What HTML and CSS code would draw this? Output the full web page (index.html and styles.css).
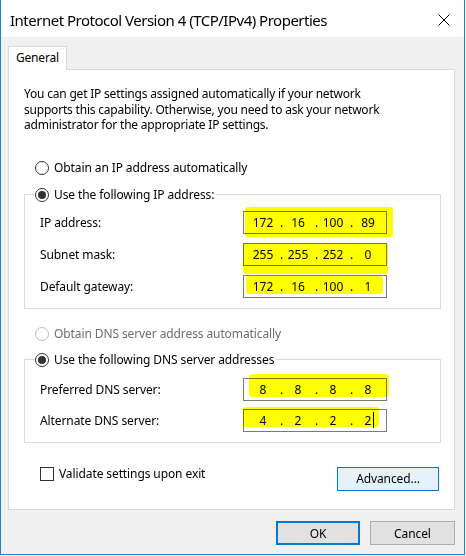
FILE: index.html
```html
<!DOCTYPE html>
<html lang="en">
<head>
  <meta charset="UTF-8">
  <meta name="viewport" content="width=device-width, initial-scale=1.0">
  <title>Internet Protocol Version 4 (TCP/IPv4) Properties</title>
  <link rel="stylesheet" href="styles.css">
</head>
<body>
  <div class="window">
    <div class="titlebar">
      <span class="title">Internet Protocol Version 4 (TCP/IPv4) Properties</span>
      <svg class="close" width="12" height="12" viewBox="0 0 12 12">
        <path d="M0.5 0.5 L11.5 11.5 M11.5 0.5 L0.5 11.5" stroke="#000" stroke-width="1" fill="none"/>
      </svg>
    </div>

    <div class="dialog-body">
      <div class="tabs">
        <div class="tab">General</div>
      </div>

      <div class="panel">
        <p class="intro">You can get IP settings assigned automatically if your network<br>supports this capability. Otherwise, you need to ask your network<br>administrator for the appropriate IP settings.</p>

        <div class="radio-row radio-first"><span class="radio"></span>Obtain an IP address automatically</div>

        <fieldset class="group group-ip">
          <legend><span class="radio checked"></span>Use the following IP address:</legend>
          <div class="rows">
            <span class="field-label">IP address:</span>
            <div class="ip-field">
              <span class="hl hl-ip1"></span>
              <span class="octet">172</span><span class="dot">.</span><span class="octet">16</span><span class="dot">.</span><span class="octet">100</span><span class="dot">.</span><span class="octet">89</span>
            </div>

            <span class="field-label">Subnet mask:</span>
            <div class="ip-field">
              <span class="hl hl-ip2"></span>
              <span class="octet">255</span><span class="dot">.</span><span class="octet">255</span><span class="dot">.</span><span class="octet">252</span><span class="dot">.</span><span class="octet">0</span>
            </div>

            <span class="field-label">Default gateway:</span>
            <div class="ip-field">
              <span class="hl hl-ip3"></span>
              <span class="octet">172</span><span class="dot">.</span><span class="octet">16</span><span class="dot">.</span><span class="octet">100</span><span class="dot">.</span><span class="octet">1</span>
            </div>
          </div>
        </fieldset>

        <div class="radio-row radio-dns disabled"><span class="radio"></span>Obtain DNS server address automatically</div>

        <fieldset class="group group-dns">
          <legend><span class="radio checked"></span>Use the following DNS server addresses</legend>
          <div class="rows">
            <span class="field-label">Preferred DNS server:</span>
            <div class="ip-field">
              <span class="hl hl-dns1"></span>
              <span class="octet">8</span><span class="dot">.</span><span class="octet">8</span><span class="dot">.</span><span class="octet">8</span><span class="dot">.</span><span class="octet">8</span>
            </div>

            <span class="field-label">Alternate DNS server:</span>
            <div class="ip-field">
              <span class="hl hl-dns2"></span>
              <span class="octet">4</span><span class="dot">.</span><span class="octet">2</span><span class="dot">.</span><span class="octet">2</span><span class="dot">.</span><span class="octet">2</span>
              <span class="caret"></span>
            </div>
          </div>
        </fieldset>

        <div class="panel-bottom">
          <div class="check-row"><span class="checkbox"></span>Validate settings upon exit</div>
          <button class="btn btn-advanced">Advanced...</button>
        </div>
      </div>

      <div class="footer">
        <button class="btn btn-default btn-ok">OK</button>
        <button class="btn btn-cancel">Cancel</button>
      </div>
    </div>
  </div>
</body>
</html>
```

FILE: styles.css
```css
body {
  margin: 0;
  background-color: #f7f7f7;
  font-family: "Noto Sans", "Open Sans", sans-serif;
  font-size: 12px;
  color: #000;
}
.window {
  width: 465px;
  height: 555px;
  box-sizing: border-box;
  border: 1px solid #1883d7;
  border-top: none;
  background-color: #f0f0f0;
  display: flex;
  flex-direction: column;
}
.titlebar {
  flex: none;
  height: 37px;
  box-sizing: border-box;
  padding: 2px 14px 0 9px;
  background-color: #fff;
  display: flex;
  align-items: center;
  justify-content: space-between;
}
.title {
  font-size: 15px;
  letter-spacing: -0.5px;
}
.dialog-body {
  flex: 1;
  padding: 9px 9px 0 7px;
}
.tabs {
  display: flex;
}
.tab {
  position: relative;
  z-index: 1;
  height: 24px;
  box-sizing: border-box;
  margin-bottom: -1px;
  padding: 0 7px;
  line-height: 22px;
  letter-spacing: -0.2px;
  background-color: #fff;
  border: 1px solid #d9d9d9;
  border-bottom: none;
}
.panel {
  height: 441px;
  box-sizing: border-box;
  padding: 16px 13px 0 15px;
  background-color: #fff;
  border: 1px solid #d9d9d9;
  letter-spacing: -0.1px;
}
.intro {
  margin: 0;
  line-height: 15.5px;
  letter-spacing: -0.2px;
}

/* radios and checkbox */
.radio-row {
  display: flex;
  align-items: center;
  height: 16px;
  margin-left: 11px;
}
.radio-first {
  margin-top: 27px;
}
.radio-dns {
  margin-top: 17px;
}
.radio {
  position: relative;
  flex: none;
  display: inline-block;
  width: 14px;
  height: 14px;
  box-sizing: border-box;
  margin-right: 5px;
  border: 1px solid #333;
  border-radius: 50%;
  background-color: #fff;
}
.radio.checked::after {
  content: "";
  position: absolute;
  inset: 2px;
  border-radius: 50%;
  background-color: #333;
}
.disabled {
  color: #6d6d6d;
}
.disabled .radio {
  border-color: #bcbcbc;
}

/* group boxes */
.group {
  margin: 11px 0 0 0;
  padding: 8px 0 10px 10px;
  border: 1px solid #dcdcdc;
}
.group-dns {
  margin-top: 10px;
  padding-top: 10px;
}
.group legend {
  display: flex;
  align-items: center;
  height: 16px;
  padding: 0 2px 0 0;
}
.rows {
  display: grid;
  grid-template-columns: 203px 144px;
  grid-auto-rows: 23px;
  row-gap: 9px;
  align-items: center;
  margin-left: 5px;
}
.group-dns .rows {
  row-gap: 8px;
}
.ip-field {
  position: relative;
  display: flex;
  align-items: center;
  height: 23px;
  box-sizing: border-box;
  padding-left: 5px;
  border: 1px solid #7a7a7a;
  background-color: #fff;
  letter-spacing: 0;
}
.octet {
  position: relative;
  width: 28px;
  text-align: center;
}
.dot {
  position: relative;
  width: 7px;
  box-sizing: border-box;
  padding-left: 2px;
  text-align: center;
}
.caret {
  position: absolute;
  left: 129px;
  top: 2px;
  width: 1px;
  height: 16px;
  background-color: #000;
}

/* marker highlights drawn over the fields */
.hl {
  position: absolute;
  background-color: #ffff00;
  mix-blend-mode: multiply;
  border-radius: 3px;
}
.hl-ip1 {
  left: 1px;
  top: -5px;
  width: 148px;
  height: 30px;
}
.hl-ip2 {
  left: -1px;
  top: -1px;
  width: 145px;
  height: 31px;
}
.hl-ip3 {
  left: 2px;
  top: 0;
  width: 137px;
  height: 18px;
}
.hl-dns1 {
  left: 5px;
  top: -5px;
  width: 140px;
  height: 23px;
}
.hl-dns2 {
  left: -1px;
  top: -3px;
  width: 136px;
  height: 20px;
}

.panel-bottom {
  display: flex;
  justify-content: space-between;
  align-items: flex-start;
  margin-top: 24px;
}
.check-row {
  display: flex;
  align-items: center;
  height: 14px;
  margin-left: 16px;
}
.checkbox {
  flex: none;
  width: 14px;
  height: 14px;
  box-sizing: border-box;
  margin-right: 5px;
  border: 1px solid #333;
  background-color: #fff;
}

/* buttons */
.btn {
  height: 24px;
  box-sizing: border-box;
  padding: 0;
  font-family: inherit;
  font-size: 12px;
  letter-spacing: -0.1px;
  color: #000;
  background-color: #e1e1e1;
  border: 1px solid #adadad;
}
.btn-advanced {
  width: 102px;
  margin-right: 2px;
  background-color: #e5f1fb;
  border-color: #0078d7;
}
.footer {
  display: flex;
  justify-content: flex-end;
  gap: 10px;
  margin-top: 11px;
}
.btn-default {
  border: 2px solid #0078d7;
}
.btn-ok {
  width: 84px;
}
.btn-cancel {
  width: 85px;
}
```
